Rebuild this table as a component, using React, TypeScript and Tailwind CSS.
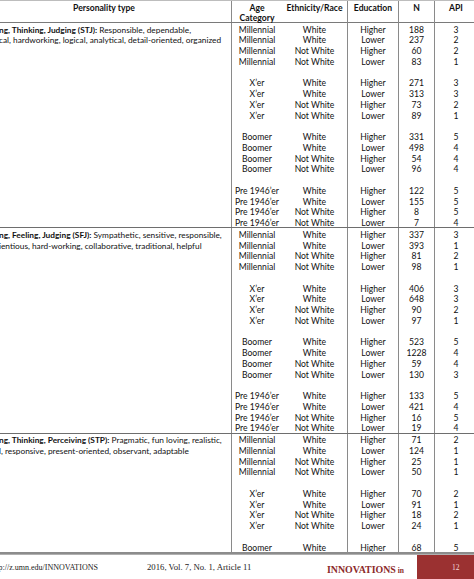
import React from "react";

type Row = [string, string, string, string, string] | null;

const group = (age: string, ns: string[], apis: string[]): Row[] => [
  [age, "White", "Higher", ns[0], apis[0]],
  [age, "White", "Lower", ns[1], apis[1]],
  [age, "Not White", "Higher", ns[2], apis[2]],
  [age, "Not White", "Lower", ns[3], apis[3]],
];

const sec1: Row[] = [
  ...group("Millennial", ["188", "237", "60", "83"], ["3", "2", "2", "1"]),
  null,
  ...group("X\u2019er", ["271", "313", "73", "89"], ["3", "3", "2", "1"]),
  null,
  ...group("Boomer", ["331", "498", "54", "96"], ["5", "4", "4", "4"]),
  null,
  ...group("Pre 1946\u2019er", ["122", "155", "8", "7"], ["5", "5", "5", "4"]),
];

const sec2: Row[] = [
  ...group("Millennial", ["337", "393", "81", "98"], ["3", "1", "2", "1"]),
  null,
  ...group("X\u2019er", ["406", "648", "90", "97"], ["3", "3", "2", "1"]),
  null,
  ...group("Boomer", ["523", "1228", "59", "130"], ["5", "4", "4", "3"]),
  null,
  ...group("Pre 1946\u2019er", ["133", "421", "16", "19"], ["5", "4", "5", "4"]),
];

const sec3: Row[] = [
  ...group("Millennial", ["71", "124", "25", "50"], ["2", "1", "1", "1"]),
  null,
  ...group("X\u2019er", ["70", "91", "18", "24"], ["2", "1", "2", "1"]),
  null,
  ["Boomer", "White", "Higher", "68", "5"],
];

const cell = "h-[10.75px] pt-[1.5px] text-center whitespace-nowrap";

function DataRows({ rows }: { rows: Row[] }) {
  return (
    <div className="grid grid-cols-[50px_66px_51px_36px_42px] shrink-0">
      {rows.map((r, i) => {
        const v = r ?? ["", "", "", "", ""];
        return (
          <React.Fragment key={i}>
            <div className={cell}>{v[0]}</div>
            <div className={cell + " border-r border-[#8a8a8a]"}>{v[1]}</div>
            <div className={cell + " border-r border-[#8a8a8a]"}>{v[2]}</div>
            <div className={cell + " border-r border-[#8a8a8a]"}>{v[3]}</div>
            <div className={cell}>{v[4]}</div>
          </React.Fragment>
        );
      })}
    </div>
  );
}

function Section({
  bold,
  rest,
  line2,
  rows,
  border,
}: {
  bold: string;
  rest: string;
  line2: string;
  rows: Row[];
  border: boolean;
}) {
  return (
    <div className={"flex " + (border ? "border-b border-[#6e6e6e]" : "")}>
      <div className="w-[232px] shrink-0 border-r border-[#8a8a8a] overflow-hidden text-[8.3px] pt-[1.5px]">
        <div className="whitespace-nowrap ml-[-1px] h-[10.75px]">
          <span className="font-bold">{bold}</span>
          {rest}
        </div>
        <div className="whitespace-nowrap ml-[-1px] h-[10.75px]">{line2}</div>
      </div>
      <DataRows rows={rows} />
    </div>
  );
}

export default function App() {
  return (
    <div className="w-[474px] h-[579px] overflow-hidden bg-white text-[#111] flex flex-col">
      <div
        className="text-[8.6px] leading-[10.75px] border-t border-[#bdbdbd]"
        style={{ fontFamily: "Lato, 'Open Sans', sans-serif" }}
      >
        <div className="flex h-[22px] border-b-[1.5px] border-[#7a7a7a] font-bold">
          <div className="w-[232px] shrink-0 border-r border-[#8a8a8a] text-center pr-[23px] pt-[1.5px]">
            Personality type
          </div>
          <div className="grid grid-cols-[50px_66px_51px_36px_42px] shrink-0">
            <div className="text-center pt-[1.5px]">
              Age
              <br />
              Category
            </div>
            <div className="text-center pt-[1.5px] border-r border-[#8a8a8a]">Ethnicity/Race</div>
            <div className="text-center pt-[1.5px] border-r border-[#8a8a8a]">Education</div>
            <div className="text-center pt-[1.5px] border-r border-[#8a8a8a]">N</div>
            <div className="text-center pt-[1.5px]">API</div>
          </div>
        </div>
        <Section
          bold="ng, Thinking, Judging (STJ):"
          rest=" Responsible, dependable,"
          line2="cal, hardworking, logical, analytical, detail-oriented, organized"
          rows={sec1}
          border
        />
        <Section
          bold="ng, Feeling, Judging (SFJ):"
          rest=" Sympathetic, sensitive, responsible,"
          line2="ientious, hard-working, collaborative, traditional, helpful"
          rows={sec2}
          border
        />
        <Section
          bold="ng, Thinking, Perceiving (STP):"
          rest=" Pragmatic, fun loving, realistic,"
          line2="l, responsive, present-oriented, observant, adaptable"
          rows={sec3}
          border={false}
        />
      </div>
      <div className="border-t-2 border-[#8c8c8c]" />
      <div className="h-[6px]" />
      <div className="border-t border-[#b0b0b0]" />
      <div
        className="flex items-center flex-1 text-[#222] pt-[1px]"
        style={{ fontFamily: "'Liberation Serif', 'Times New Roman', serif" }}
      >
        <div className="w-[147px] shrink-0 text-[8px] whitespace-nowrap overflow-hidden">
          <span className="ml-[-1.5px] inline-block">p://z.umn.edu/INNOVATIONS</span>
        </div>
        <div className="w-[180px] shrink-0 text-[8.7px] whitespace-nowrap">2016, Vol. 7, No. 1, Article 11</div>
        <div className="w-[90px] shrink-0 whitespace-nowrap font-bold text-[#8c2a2a]">
          <span className="text-[9.9px]">INNOVATIONS</span>
          <span className="text-[7.5px]"> in</span>
        </div>
        <div className="self-stretch mt-[-1px] flex-1 bg-[#9b3131] flex items-center text-[7.5px] text-[#f3dada] pl-[35px]">
          12
        </div>
      </div>
    </div>
  );
}
